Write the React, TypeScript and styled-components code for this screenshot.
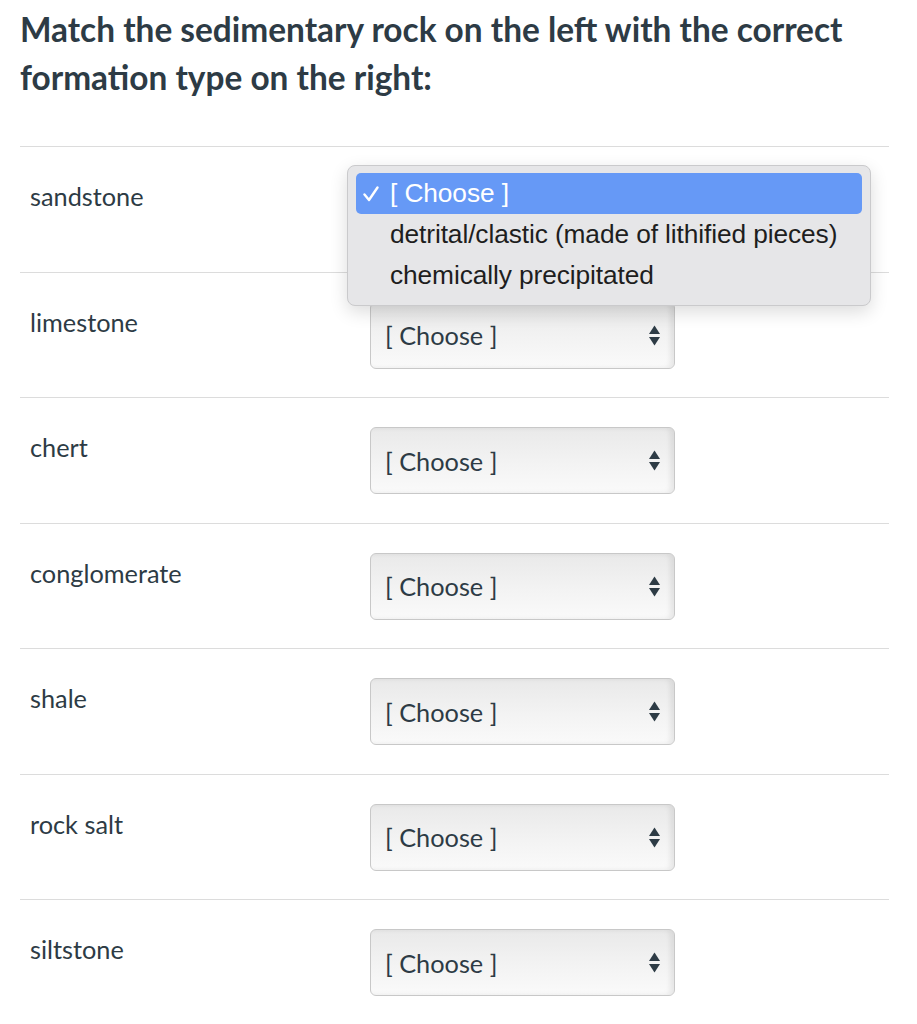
import styled, { createGlobalStyle } from "styled-components";

const GlobalStyle = createGlobalStyle`
  body {
    margin: 0;
    background: #fff;
    font-family: Lato, "Open Sans", sans-serif;
    color: #2d3b45;
  }
`;

const rocks = [
  "sandstone",
  "limestone",
  "chert",
  "conglomerate",
  "shale",
  "rock salt",
  "siltstone",
];

const options = [
  "[ Choose ]",
  "detrital/clastic (made of lithified pieces)",
  "chemically precipitated",
];

const Page = styled.main`
  width: 869px;
  padding: 5px 0 0 20px;
`;

const Question = styled.h1`
  margin: 0 0 45px;
  font-size: 33.4px;
  font-weight: 700;
  line-height: 48px;
  color: #2d3b45;
`;

const Row = styled.div`
  position: relative;
  display: flex;
  align-items: flex-start;
  height: 125.5px;
  box-sizing: border-box;
  border-top: 1px solid #dcdcdc;
`;

const Label = styled.div`
  width: 340px;
  padding: 31px 0 0 10px;
  font-size: 25.3px;
  line-height: 36px;
`;

const Select = styled.div`
  margin-top: 29px;
  width: 305px;
  height: 67px;
  box-sizing: border-box;
  display: flex;
  align-items: center;
  justify-content: space-between;
  padding: 0 13px 0 14px;
  border: 1px solid #c8c8c8;
  border-radius: 6px;
  background: linear-gradient(180deg, #e9e9e9 0%, #f3f3f3 55%, #fafafa 100%);
  box-shadow: inset -4px 0 5px rgba(0, 0, 0, 0.07);
  font-size: 25.3px;
  color: #2d3b45;
`;

const Arrows = () => (
  <svg width="13" height="23" viewBox="0 0 13 23">
    <path d="M6.5 1.5 L12 10 H1 Z" fill="#2d3b45" />
    <path d="M1 13 H12 L6.5 21.5 Z" fill="#2d3b45" />
  </svg>
);

const Popup = styled.div`
  position: absolute;
  left: 327px;
  top: 18px;
  width: 524px;
  height: 141px;
  box-sizing: border-box;
  padding: 7px 8px;
  background: #e6e6e8;
  border: 1px solid #cacacc;
  border-radius: 8px;
  box-shadow: 0 6px 18px rgba(0, 0, 0, 0.14);
  font-family: "Liberation Sans", Arial, sans-serif;
  z-index: 2;
`;

const Option = styled.div<{ $active?: boolean }>`
  position: relative;
  height: 41px;
  display: flex;
  align-items: center;
  padding-left: 34px;
  border-radius: 5px;
  font-size: 26.3px;
  letter-spacing: -0.1px;
  color: ${(p) => (p.$active ? "#fff" : "#1e1e1e")};
  background: ${(p) => (p.$active ? "#6699f6" : "transparent")};
`;

const CheckMark = () => (
  <svg
    width="16"
    height="16"
    viewBox="0 0 16 16"
    style={{ position: "absolute", left: 7, top: 13 }}
  >
    <path
      d="M1.5 8.5 L6 14 L14.5 1.5"
      fill="none"
      stroke="#fff"
      strokeWidth="2.4"
      strokeLinecap="round"
      strokeLinejoin="round"
    />
  </svg>
);

export default function App() {
  return (
    <Page>
      <GlobalStyle />
      <Question>
        Match the sedimentary rock on the left with the correct formation type
        on the right:
      </Question>
      {rocks.map((rock, i) => (
        <Row key={rock}>
          <Label>{rock}</Label>
          <Select>
            <span>[ Choose ]</span>
            <Arrows />
          </Select>
          {i === 0 && (
            <Popup>
              {options.map((opt, j) => (
                <Option key={opt} $active={j === 0}>
                  {j === 0 && <CheckMark />}
                  {opt}
                </Option>
              ))}
            </Popup>
          )}
        </Row>
      ))}
    </Page>
  );
}
